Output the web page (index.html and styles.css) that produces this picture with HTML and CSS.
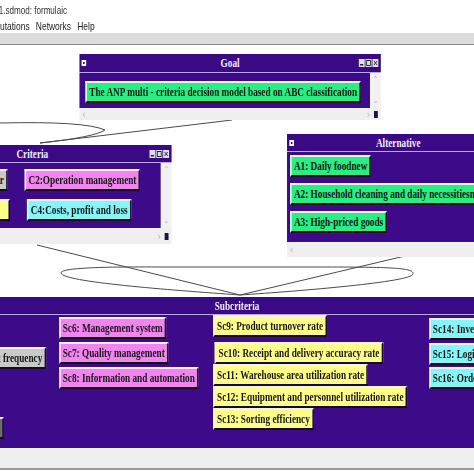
FILE: index.html
```html
<!DOCTYPE html>
<html lang="en">
<head>
    <meta charset="UTF-8">
    <title>formulaic - ANP model</title>
    <link rel="stylesheet" href="styles.css">
</head>
<body>
    <div class="screen">
        <svg class="links" width="474" height="474" viewBox="0 0 474 474">
            <path d="M0 123 Q85 121 105 130 Q95 137 40 143" />
            <path d="M40 143 L232 120" />
            <path d="M37 245 L240 295" />
            <path d="M405 256 L240 295" />
            <path d="M240 295 C170 290 62 282 61 273 C60 266 140 267 160 267 L320 267 C395 267 414 268 413 274 C412 282 300 291 240 295" />
        </svg>

        <div class="stage">
            <div class="app-title">j1.sdmod: formulaic</div>
            <div class="menu">
                <span>utations</span>
                <span>Networks</span>
                <span>Help</span>
            </div>
            <div class="toolbar"></div>

            <div class="canvas">
                <!-- Goal cluster -->
                <div class="win goal">
                    <div class="win-bar">
                        <span class="win-icon"></span>
                        <span class="win-title">Goal</span>
                        <svg class="ctrls" width="26" height="8" viewBox="0 0 26 8">
                            <rect x="0" y="0" width="8" height="8" fill="#dcdcea" />
                            <rect x="2" y="5" width="4" height="1.5" fill="#222" />
                            <rect x="9" y="0" width="8" height="8" fill="#dcdcea" />
                            <rect x="10.5" y="1.5" width="5" height="5" fill="none" stroke="#222" />
                            <rect x="18" y="0" width="8" height="8" fill="#dcdcea" />
                            <path d="M20 2 L24 6 M24 2 L20 6" stroke="#222" />
                        </svg>
                    </div>
                    <div class="win-main">
                        <div class="win-body">
                            <div class="node green">The ANP multi - criteria decision model based on ABC classification</div>
                        </div>
                        <div class="vscroll"><span>&#8963;</span><span>&#8964;</span></div>
                    </div>
                    <div class="hscroll">
                        <span>&lsaquo;</span>
                        <span class="right">&rsaquo;</span>
                        <b class="corner"></b>
                    </div>
                </div>

                <!-- Criteria cluster -->
                <div class="win criteria">
                    <div class="win-bar">
                        <span class="win-icon"></span>
                        <span class="win-title">Criteria</span>
                        <svg class="ctrls" width="26" height="8" viewBox="0 0 26 8">
                            <rect x="0" y="0" width="8" height="8" fill="#dcdcea" />
                            <rect x="2" y="5" width="4" height="1.5" fill="#222" />
                            <rect x="9" y="0" width="8" height="8" fill="#dcdcea" />
                            <rect x="10.5" y="1.5" width="5" height="5" fill="none" stroke="#222" />
                            <rect x="18" y="0" width="8" height="8" fill="#dcdcea" />
                            <path d="M20 2 L24 6 M24 2 L20 6" stroke="#222" />
                        </svg>
                    </div>
                    <div class="win-main">
                        <div class="win-body">
                            <div class="node-row">
                                <div class="node gray fixed">C1:Inventory behavior</div>
                                <div class="node pink">C2:Operation management</div>
                            </div>
                            <div class="node-row">
                                <div class="node yellow fixed wide">C3:Efficiency</div>
                                <div class="node cyan">C4:Costs, profit and loss</div>
                            </div>
                        </div>
                        <div class="vscroll"><span>&#8963;</span><span>&#8964;</span></div>
                    </div>
                    <div class="hscroll">
                        <span>&lsaquo;</span>
                        <span class="right">&rsaquo;</span>
                        <b class="corner"></b>
                    </div>
                </div>

                <!-- Alternative cluster -->
                <div class="win alternative">
                    <div class="win-bar">
                        <span class="win-icon"></span>
                        <span class="win-title">Alternative</span>
                        <span></span>
                    </div>
                    <div class="win-main">
                        <div class="win-body">
                            <div class="node green">A1: Daily foodnew</div>
                            <div class="node green">A2: Household cleaning and daily necessitiesmaterials</div>
                            <div class="node green">A3: High-priced goods</div>
                        </div>
                    </div>
                    <div class="hscroll">
                        <span>&lsaquo;</span>
                    </div>
                </div>

                <!-- Subcriteria cluster -->
                <div class="win subcriteria">
                    <div class="win-bar">
                        <span></span>
                        <span class="win-title">Subcriteria</span>
                        <span></span>
                    </div>
                    <div class="win-main">
                        <div class="win-body sub-grid">
                            <div class="sub-col col-gray">
                                <div class="node gray">Sc4: Stock count frequency</div>
                                <div class="node dark">Sc5: Stock accuracy</div>
                            </div>
                            <div class="sub-col col-pink">
                                <div class="node pink">Sc6: Management system</div>
                                <div class="node pink">Sc7: Quality management</div>
                                <div class="node pink">Sc8: Information and automation</div>
                            </div>
                            <div class="sub-col col-yellow">
                                <div class="node yellow">Sc9: Product turnover rate</div>
                                <div class="node yellow">Sc10: Receipt and delivery accuracy rate</div>
                                <div class="node yellow">Sc11: Warehouse area utilization rate</div>
                                <div class="node yellow">Sc12: Equipment and personnel utilization rate</div>
                                <div class="node yellow">Sc13: Sorting efficiency</div>
                            </div>
                            <div class="sub-col col-cyan">
                                <div class="node cyan">Sc14: Inventory cost</div>
                                <div class="node cyan">Sc15: Logistics cost</div>
                                <div class="node cyan">Sc16: Order processing cost</div>
                            </div>
                        </div>
                    </div>
                    <div class="hscroll"></div>
                </div>
            </div>
        </div>
    </div>
</body>
</html>
```

FILE: styles.css
```css
* {
    margin: 0;
    padding: 0;
    box-sizing: border-box;
}

body {
    width: 474px;
    height: 474px;
    overflow: hidden;
    background: #ffffff;
}

.screen {
    position: relative;
    width: 474px;
    height: 474px;
    overflow: hidden;
}

.links {
    position: absolute;
    top: 0;
    left: 0;
}

.links path {
    fill: none;
    stroke: #4a4a4a;
    stroke-width: 1;
}

/* the captured window is squeezed horizontally, so lay out wide and scale */
.stage {
    position: relative;
    width: 616px;
    height: 474px;
    transform: scaleX(0.7695);
    transform-origin: 0 0;
}

.app-title {
    height: 18px;
    padding-top: 4px;
    margin-left: -4px;
    font: 10.5px/12px "Liberation Sans", sans-serif;
    color: #333;
}

.menu {
    display: flex;
    gap: 8px;
    height: 15px;
    padding-top: 2px;
    font: 11px/13px "Liberation Sans", sans-serif;
    color: #222;
}

.toolbar {
    height: 12px;
    background: #dcdcdc;
    border-bottom: 1px solid #8a8a8a;
}

.canvas {
    position: relative;
    height: 429px;
}

/* cluster windows */
.win {
    position: absolute;
    display: flex;
    flex-direction: column;
}

.win-bar {
    display: grid;
    grid-template-columns: 1fr auto 1fr;
    align-items: center;
    height: 17px;
    padding: 0 3px;
    background: #3a0a84;
    color: #f1eef8;
    font: bold 12px/1 "Liberation Serif", serif;
}

.win-icon {
    justify-self: start;
    width: 6px;
    height: 6px;
    border: 2px solid #ffffff;
    background: #20124a;
}

.ctrls {
    justify-self: end;
}

.win-main {
    display: flex;
    border-top: 1px solid #b9a8e6;
}

.win-body {
    flex: 1;
    background: #3d0a8a;
}

.vscroll {
    width: 14px;
    display: flex;
    flex-direction: column;
    justify-content: space-between;
    align-items: center;
    padding: 2px 0;
    background: #f1f1f1;
    color: #b0b0b0;
    font: 8px/10px "DejaVu Sans", sans-serif;
}

.hscroll {
    display: flex;
    align-items: center;
    padding: 0 4px;
    background: #efefef;
    color: #b0b0b0;
    font: 11px/1 "DejaVu Sans", sans-serif;
}

.hscroll .right {
    margin-left: auto;
}

.corner {
    width: 5px;
    height: 7px;
    margin-left: 5px;
    background: #1d1245;
}

/* nodes */
.node {
    width: max-content;
    padding: 2px 3px 1px;
    border: 2px solid;
    border-color: #f3eeff #111111 #111111 #f3eeff;
    font: bold 12px/15px "Liberation Serif", serif;
    color: #161616;
    white-space: nowrap;
}

.node.fixed {
    width: 140px;
    overflow: hidden;
    text-align: right;
}

.node.fixed.wide {
    width: 143px;
    text-align: left;
}

.green { background: #27ef83; }
.pink { background: #f284f0; }
.yellow { background: #fdfd88; }
.cyan { background: #86f5f8; }
.gray { background: #c9c9c9; }
.dark { background: #6e6e6e; }

.node-row {
    display: flex;
    gap: 22px;
}

/* Goal */
.goal {
    top: 9px;
    left: 103px;
    width: 392px;
}

.goal .win-bar {
    height: 18px;
}

.goal .win-main {
    height: 36px;
}

.goal .win-body {
    padding: 8px 0 0 8px;
}

.goal .hscroll {
    height: 12px;
}

/* Criteria */
.criteria {
    top: 100px;
    left: -139px;
    width: 362px;
}

.criteria .win-main {
    height: 66px;
}

.criteria .win-body {
    display: flex;
    flex-direction: column;
    gap: 8px;
    padding: 6px 0 0 9px;
}

.criteria .hscroll {
    height: 16px;
}

/* Alternative */
.alternative {
    top: 89px;
    left: 373px;
    width: 289px;
}

.alternative .win-main {
    height: 91px;
}

.alternative .win-body {
    display: flex;
    flex-direction: column;
    gap: 6px;
    padding: 3px 0 0 4px;
}

.alternative .hscroll {
    height: 15px;
}

/* Subcriteria */
.subcriteria {
    top: 252px;
    left: 0;
    width: 616px;
    border-bottom: 2px solid #9a9a9a;
}

.subcriteria .win-main {
    height: 134px;
}

.subcriteria .hscroll {
    height: 20px;
}

.sub-grid {
    display: grid;
    grid-template-columns: 60px 184px 264px 1fr;
    column-gap: 16.5px;
}

.sub-col {
    display: flex;
    flex-direction: column;
}

.col-gray {
    align-items: flex-end;
    padding-top: 32px;
    gap: 48px;
}

.col-gray .dark {
    margin-right: 55px;
}

.col-pink {
    padding-top: 2px;
    gap: 3px;
}

.col-yellow {
    padding-top: 0;
}

.col-yellow .node:first-child {
    margin-bottom: 5px;
}

.col-yellow .node:nth-child(2) {
    margin-left: 2px;
}

.col-cyan {
    padding-top: 3px;
    gap: 2.5px;
}
```
